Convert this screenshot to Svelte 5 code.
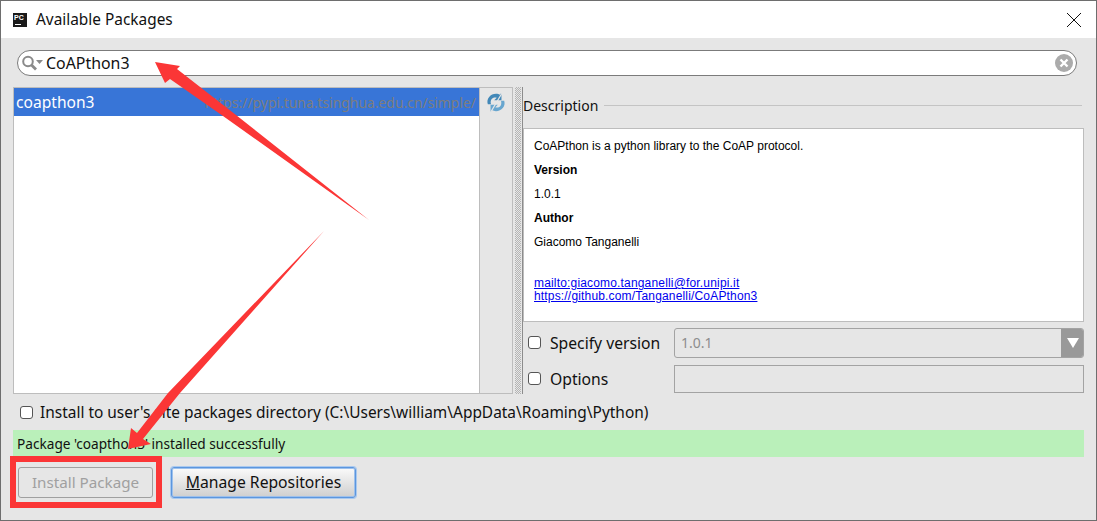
<script>
  let specify = $state(false);
  let options = $state(false);
  let userSite = $state(false);
  const packages = [{ name: 'coapthon3', repo: 'https://pypi.tuna.tsinghua.edu.cn/simple/' }];
</script>

<div class="dialog">
  <header class="titlebar">
    <div class="logo"><span>PC</span><i></i></div>
    <span class="title">Available Packages</span>
    <svg class="close" width="16" height="16" viewBox="0 0 16 16">
      <path d="M1 1 15 15M15 1 1 15" stroke="#111" stroke-width="1" fill="none" />
    </svg>
  </header>

  <main class="body">
    <div class="search">
      <svg class="glass" width="24" height="18" viewBox="0 0 24 18">
        <circle cx="7" cy="7.500" r="4.800" fill="none" stroke="#8a8a8a" stroke-width="2" />
        <path d="M10.500 11 15 15.500" stroke="#8a8a8a" stroke-width="2.800" />
        <path d="M15 6h7l-3.500 4z" fill="#8a8a8a" />
      </svg>
      <span class="query">CoAPthon3</span>
      <svg class="clear" width="18" height="18" viewBox="0 0 18 18">
        <circle cx="9" cy="9" r="9" fill="#ababab" />
        <path d="M5.500 5.500 12.500 12.500M12.500 5.500 5.500 12.500" stroke="#fff" stroke-width="2.400" />
      </svg>
    </div>

    <div class="columns">
      <section class="left">
        <div class="list">
          {#each packages as pkg}
            <div class="row">
              <span class="pkg">{pkg.name}</span>
              <span class="repo">{pkg.repo}</span>
            </div>
          {/each}
        </div>
        <div class="tools">
          <svg width="20" height="21" viewBox="0 0 22 22">
            <path d="M2 13C0 7 5 1.500 11 1.500c2 0 3 .5 4 1l2-2V8.500h-8l2.800-2.800C8 4.500 4 7 5.500 13z" fill="#4288b8" />
            <path d="M20 9c2 6-3 11.500-9 11.500-2 0-3-.5-4-1l-2 2V13.500h8l-2.800 2.800C14 17.500 18 15 16.500 9z" fill="#68a6cf" />
            <path d="M18 0 5 22" stroke="#e6e6e6" stroke-width="1.400" />
          </svg>
        </div>
      </section>

      <div class="splitter"></div>

      <section class="right">
        <div class="desc-head">
          <span>Description</span>
          <i></i>
        </div>
        <div class="desc">
          <p>CoAPthon is a python library to the CoAP protocol.</p>
          <p><b>Version</b></p>
          <p>1.0.1</p>
          <p><b>Author</b></p>
          <p>Giacomo Tanganelli</p>
          <div class="links">
            <a href="#mail">mailto:giacomo.tanganelli@for.unipi.it</a>
            <a href="#github">https://github.com/Tanganelli/CoAPthon3</a>
          </div>
        </div>
        <div class="opt-row first">
          <label class="check"><input type="checkbox" bind:checked={specify} />Specify version</label>
          <div class="combo">
            <span>1.0.1</span>
            <div class="arrow"><svg width="12" height="10" viewBox="0 0 12 10"><path d="M0 0h12L6 10z" fill="#fff" /></svg></div>
          </div>
        </div>
        <div class="opt-row">
          <label class="check"><input type="checkbox" bind:checked={options} />Options</label>
          <div class="opt-input"></div>
        </div>
      </section>
    </div>

    <label class="check user-site">
      <input type="checkbox" bind:checked={userSite} />Install to user's site packages directory (C:\Users\william\AppData\Roaming\Python)
    </label>

    <div class="status">Package 'coapthon3' installed successfully</div>

    <div class="buttons">
      <button class="btn install" disabled>Install Package</button>
      <button class="btn manage"><u>M</u>anage Repositories</button>
    </div>
  </main>

  <!-- annotations drawn on top of the screenshot -->
  <div class="red-box"></div>
  <svg class="marks" width="1097" height="521" viewBox="0 0 1097 521">
    <path d="M155 62 180 66 177 69 236 115 369 220 223 116 170 79 165 83z" fill="#fb3636" />
    <path d="M128 449 131 428 137 433 168 393 324 231 180 393 143 439 151 444z" fill="#fb3636" />
  </svg>
</div>

<style>
  :global(body) { margin: 0; }

  .dialog {
    position: relative;
    width: 1097px;
    height: 521px;
    box-sizing: border-box;
    border: 1px solid #6e6e6e;
    background: #e6e6e6;
    display: flex;
    flex-direction: column;
    overflow: hidden;
    font-family: "Noto Sans", sans-serif;
    color: #111;
  }

  .titlebar {
    height: 37px;
    flex-shrink: 0;
    background: #fff;
    display: flex;
    align-items: center;
    padding: 0 14px 0 12px;
    box-sizing: border-box;
  }

  .logo {
    width: 14px;
    height: 14px;
    background: #1a1a1a;
    color: #fff;
    position: relative;
    margin-right: 9px;
    font: bold 7px/8px "Liberation Sans", sans-serif;
  }
  .logo span { position: absolute; left: 1px; top: 1px; }
  .logo i { position: absolute; left: 2px; bottom: 2px; width: 6px; height: 1px; background: #fff; }

  .title { font-size: 15.400px; flex: 1; }
  .close { display: block; }

  .body {
    flex: 1;
    display: flex;
    flex-direction: column;
    padding: 12px 12px 0;
    min-height: 0;
  }

  .search {
    height: 26px;
    box-sizing: border-box;
    margin: 0 7px 0 4px;
    border: 1px solid #7b7b7b;
    border-radius: 13px;
    background: #fff;
    display: flex;
    align-items: center;
    padding: 0 3px 0 3px;
    flex-shrink: 0;
  }
  .glass { flex-shrink: 0; margin-right: 1px; }
  .query { flex: 1; font-size: 15.900px; line-height: 20px; }

  .columns {
    display: flex;
    height: 307px;
    margin-top: 11px;
    flex-shrink: 0;
  }

  .left {
    width: 500px;
    flex-shrink: 0;
    box-sizing: border-box;
    border: 1px solid #bdbdbd;
    display: flex;
  }
  .list { flex: 1; background: #fff; min-width: 0; }
  .row {
    height: 28px;
    background: #3875d7;
    display: flex;
    align-items: center;
    justify-content: space-between;
    padding: 0 3px 0 2px;
    overflow: hidden;
    white-space: nowrap;
  }
  .pkg { color: #fff; font-size: 15.600px; }
  .repo { color: #7d7d7d; font-size: 13.900px; }

  .tools {
    width: 33px;
    flex-shrink: 0;
    border-left: 1px solid #bdbdbd;
    display: flex;
    justify-content: center;
    padding-top: 4px;
    box-sizing: border-box;
  }
  .tools svg { display: block; }

  .splitter {
    width: 6px;
    flex-shrink: 0;
    margin: 0 1px 0 2px;
    background: repeating-conic-gradient(#b4b4b4 0 25%, #e6e6e6 0 50%) 0 0 / 2px 2px;
  }

  .right {
    flex: 1;
    min-width: 0;
    display: flex;
    flex-direction: column;
    border-left: 1px solid #8c8c8c;
  }

  .desc-head {
    height: 41px;
    box-sizing: border-box;
    padding: 0 2px 5px 0;
    display: flex;
    align-items: center;
    gap: 6px;
    font-size: 14px;
    flex-shrink: 0;
  }
  .desc-head i { flex: 1; height: 1px; background: #c4c4c4; }

  .desc {
    height: 194px;
    box-sizing: border-box;
    flex-shrink: 0;
    background: #fff;
    border: 1px solid #bdbdbd;
    padding: 10px 10px;
    font: 12px/14px "Liberation Sans", Arial, sans-serif;
    color: #000;
  }
  .desc p { margin: 0 0 10px; }
  .links { margin-top: 28px; }
  .links a { display: block; color: #0000ee; line-height: 13px; letter-spacing: 0.170px; }

  .opt-row {
    display: flex;
    align-items: center;
    margin-top: 7px;
    padding-left: 5px;
    height: 29px;
  }
  .opt-row.first { margin-top: 6px; }

  .check {
    display: flex;
    align-items: center;
    font-size: 15.500px;
    white-space: nowrap;
  }
  .check input {
    appearance: none;
    width: 13px;
    height: 13px;
    margin: 0 9px 0 0;
    background: #fff;
    border: 1px solid #555;
    border-radius: 3px;
    flex-shrink: 0;
  }

  .opt-row .check { width: 146px; font-size: 15.700px; }

  .combo {
    flex: 1;
    height: 30px;
    box-sizing: border-box;
    border: 1px solid #a3a3a3;
    border-radius: 3px;
    display: flex;
    align-items: center;
    justify-content: space-between;
    color: #8d8d8d;
    font-size: 14px;
    padding-left: 6px;
    overflow: hidden;
  }
  .arrow {
    width: 23px;
    align-self: stretch;
    background: #999;
    display: flex;
    align-items: center;
    justify-content: center;
    margin: -1px -1px -1px 0;
  }

  .opt-input {
    flex: 1;
    height: 28px;
    box-sizing: border-box;
    border: 1px solid #a3a3a3;
  }

  .user-site { margin: 9px 0 0 7px; height: 18px; font-size: 15.450px; }
  .user-site input { margin-right: 7px; }

  .status {
    height: 27px;
    flex-shrink: 0;
    margin-top: 9px;
    background: #baf0ba;
    font-size: 13.650px;
    line-height: 27px;
    padding-left: 4px;
  }

  .buttons {
    display: flex;
    gap: 18px;
    margin: 10px 0 0 5px;
  }
  .btn {
    height: 31px;
    box-sizing: border-box;
    font-family: "Noto Sans", sans-serif;
    font-size: 15.200px;
    border-radius: 3px;
    padding: 0 0 2px;
  }
  .install {
    width: 135px;
    background: #e6e6e6;
    border: 1px solid #a0a0a0;
    color: #a0a0a0;
  }
  .manage {
    width: 185px;
    color: #111;
    font-size: 15.700px;
    background: linear-gradient(#fafafa, #cfcfcf);
    border: 1px solid #5c96de;
    box-shadow: 0 0 0 1px #a9c9ef, inset 0 0 0 1px #9cc0ec;
  }

  .red-box {
    position: absolute;
    left: 9px;
    top: 455px;
    width: 152px;
    height: 52px;
    box-sizing: border-box;
    border: 6px solid #fb3636;
    pointer-events: none;
  }

  .marks { position: absolute; left: -1px; top: -1px; pointer-events: none; }
</style>
